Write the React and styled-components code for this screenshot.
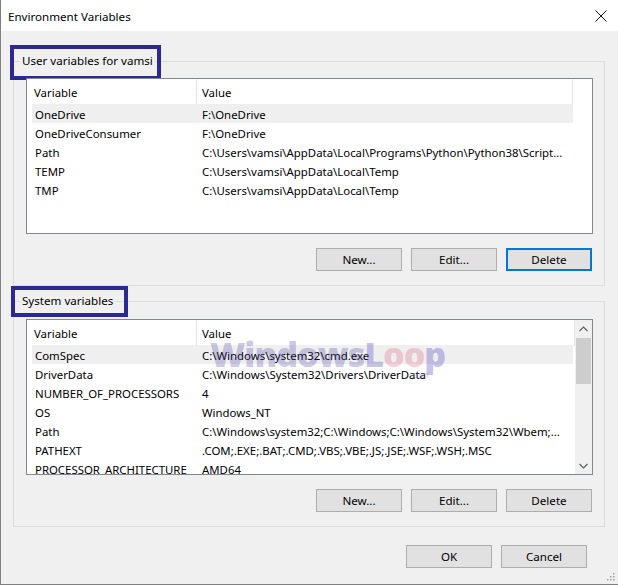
import React from "react";
import styled, { createGlobalStyle } from "styled-components";

const GlobalStyle = createGlobalStyle`
  body {
    margin: 0;
    font-family: "Noto Sans", "Open Sans", sans-serif;
    font-size: 11.4px;
    color: #000;
  }
  * {
    box-sizing: border-box;
  }
`;

const Window = styled.div`
  position: relative;
  width: 618px;
  height: 585px;
  background: #f0f0f0;
  border-left: 1px solid #7f7f7f;
  border-bottom: 1px solid #7f7f7f;
  display: flex;
  flex-direction: column;
  overflow: hidden;
`;

const TitleBar = styled.div`
  height: 31px;
  flex-shrink: 0;
  background: #fff;
  display: flex;
  align-items: center;
  justify-content: space-between;
  padding-left: 7px;
`;

const Title = styled.span`
  font-size: 11.6px;
  padding-top: 1px;
`;

const CloseButton = styled.div`
  width: 34px;
  height: 31px;
  display: flex;
  align-items: center;
  justify-content: center;
`;

const Body = styled.div`
  padding: 22px 13px 0 12px;
  display: flex;
  flex-direction: column;
`;

const Group = styled.fieldset`
  margin: ${(p) => (p.$first ? "0" : "7px 0 0")};
  padding: ${(p) => (p.$first ? "9px" : "10px")} 11px 14px 12px;
  border: 1px solid #dcdcdc;
  min-width: 0;
`;

const Legend = styled.legend`
  position: relative;
  margin-left: -6px;
  padding: 0 2px;
  line-height: 16px;
  font-size: 11.6px;
`;

const Highlight = styled.span`
  position: absolute;
  left: ${(p) => p.$left}px;
  top: ${(p) => p.$top}px;
  width: ${(p) => p.$width}px;
  height: ${(p) => p.$height}px;
  border: 4px solid #2c2a92;
  pointer-events: none;
`;

const List = styled.div`
  position: relative;
  height: 156px;
  background: #fff;
  border: 1px solid #828790;
  display: flex;
  overflow: hidden;
`;

const ListContent = styled.div`
  flex: 1;
  min-width: 0;
`;

const Header = styled.div`
  display: grid;
  grid-template-columns: 170px 1fr;
  height: 25px;
  width: ${(p) => (p.$scroll ? "100%" : "546px")};
`;

const HeaderCell = styled.div`
  line-height: 25px;
  padding-top: 1px;
  padding-left: ${(p) => (p.$first ? 7 : 5)}px;
  border-right: 1px solid #e5e5e5;
  white-space: nowrap;
`;

const Row = styled.div`
  display: grid;
  grid-template-columns: 164px 1fr;
  height: 19px;
  width: 541px;
  margin-left: 5px;
  background: ${(p) => (p.$hover ? "#efefef" : "transparent")};
`;

const Cell = styled.div`
  line-height: 19px;
  padding-top: 1px;
  padding-left: ${(p) => (p.$first ? 3 : 6)}px;
  white-space: nowrap;
  overflow: hidden;
`;

const Scrollbar = styled.div`
  width: 17px;
  flex-shrink: 0;
  background: #f0f0f0;
  display: flex;
  flex-direction: column;
`;

const Arrow = styled.div`
  height: 17px;
  display: flex;
  align-items: center;
  justify-content: center;
`;

const Track = styled.div`
  flex: 1;
  padding: 1px 1px 0;
`;

const Thumb = styled.div`
  height: 46px;
  background: #cdcdcd;
`;

const ButtonRow = styled.div`
  display: flex;
  justify-content: flex-end;
  gap: ${(p) => p.$gap || 9}px;
  margin-top: ${(p) => p.$top || 14}px;
  padding-right: ${(p) => p.$right || 1}px;
`;

const Button = styled.button`
  width: 86px;
  height: 23px;
  background: #e1e1e1;
  border: ${(p) => (p.$default ? "2px solid #0078d7" : "1px solid #adadad")};
  font-family: inherit;
  font-size: 11.6px;
  color: #000;
  padding: 0;
`;

const Watermark = styled.div`
  position: absolute;
  left: 183px;
  top: 14px;
  font-family: "Open Sans", "Noto Sans", sans-serif;
  font-weight: 800;
  font-size: 34px;
  line-height: 40px;
  letter-spacing: -1px;
  white-space: nowrap;
  pointer-events: none;
`;

const Mark = styled.span`
  color: ${(p) => p.$color};
`;

const Dotcom = styled.span`
  position: absolute;
  left: 200px;
  top: 36px;
  font-size: 8px;
  line-height: 10px;
  letter-spacing: 0;
  font-weight: 600;
  color: rgba(110, 100, 190, 0.35);
`;

const Grip = styled.svg`
  position: absolute;
  right: 3px;
  bottom: 3px;
`;

const userVars = [
  ["OneDrive", "F:\\OneDrive"],
  ["OneDriveConsumer", "F:\\OneDrive"],
  ["Path", "C:\\Users\\vamsi\\AppData\\Local\\Programs\\Python\\Python38\\Script..."],
  ["TEMP", "C:\\Users\\vamsi\\AppData\\Local\\Temp"],
  ["TMP", "C:\\Users\\vamsi\\AppData\\Local\\Temp"],
];

const systemVars = [
  ["ComSpec", "C:\\Windows\\system32\\cmd.exe"],
  ["DriverData", "C:\\Windows\\System32\\Drivers\\DriverData"],
  ["NUMBER_OF_PROCESSORS", "4"],
  ["OS", "Windows_NT"],
  ["Path", "C:\\Windows\\system32;C:\\Windows;C:\\Windows\\System32\\Wbem;..."],
  ["PATHEXT", ".COM;.EXE;.BAT;.CMD;.VBS;.VBE;.JS;.JSE;.WSF;.WSH;.MSC"],
  ["PROCESSOR_ARCHITECTURE", "AMD64"],
];

function VarList({ rows, scroll, children }) {
  return (
    <List>
      <ListContent>
        <Header $scroll={scroll}>
          <HeaderCell $first>Variable</HeaderCell>
          <HeaderCell>Value</HeaderCell>
        </Header>
        {rows.map(([name, value], i) => (
          <Row key={name + i} $hover={i === 0}>
            <Cell $first>{name}</Cell>
            <Cell>{value}</Cell>
          </Row>
        ))}
      </ListContent>
      {scroll && (
        <Scrollbar>
          <Arrow>
            <svg width="9" height="6" viewBox="0 0 9 6">
              <path d="M0.5 5 L4.5 1 L8.5 5" fill="none" stroke="#606060" strokeWidth="1.2" />
            </svg>
          </Arrow>
          <Track>
            <Thumb />
          </Track>
          <Arrow>
            <svg width="9" height="6" viewBox="0 0 9 6">
              <path d="M0.5 1 L4.5 5 L8.5 1" fill="none" stroke="#606060" strokeWidth="1.2" />
            </svg>
          </Arrow>
        </Scrollbar>
      )}
      {children}
    </List>
  );
}

export default function App() {
  return (
    <>
      <GlobalStyle />
      <Window>
        <TitleBar>
          <Title>Environment Variables</Title>
          <CloseButton>
            <svg width="12" height="12" viewBox="0 0 12 12">
              <path d="M0.5 0.5 L11.5 11.5 M11.5 0.5 L0.5 11.5" stroke="#111" strokeWidth="1" />
            </svg>
          </CloseButton>
        </TitleBar>
        <Body>
          <Group $first>
            <Legend>
              User variables for vamsi
              <Highlight $left={-10} $top={-8} $width={151} $height={35} />
            </Legend>
            <VarList rows={userVars} />
            <ButtonRow>
              <Button>New...</Button>
              <Button>Edit...</Button>
              <Button $default>Delete</Button>
            </ButtonRow>
          </Group>
          <Group>
            <Legend>
              System variables
              <Highlight $left={-9} $top={-7} $width={117} $height={31} />
            </Legend>
            <VarList rows={systemVars} scroll>
              <Watermark>
                <Mark $color="rgba(80, 70, 170, 0.3)">Windows</Mark>
                <Mark $color="rgba(110, 90, 200, 0.38)">L</Mark>
                <Mark $color="rgba(225, 110, 140, 0.33)">oo</Mark>
                <Mark $color="rgba(110, 90, 200, 0.38)">p</Mark>
                <Dotcom>.com</Dotcom>
              </Watermark>
            </VarList>
            <ButtonRow>
              <Button>New...</Button>
              <Button>Edit...</Button>
              <Button>Delete</Button>
            </ButtonRow>
          </Group>
          <ButtonRow $top={18} $right={18}>
            <Button>OK</Button>
            <Button>Cancel</Button>
          </ButtonRow>
        </Body>
        <Grip width="9" height="9" viewBox="0 0 9 9">
          <g fill="#a0a0a0">
            <rect x="7" y="1" width="1.5" height="1.5" />
            <rect x="4" y="4" width="1.5" height="1.5" />
            <rect x="7" y="4" width="1.5" height="1.5" />
            <rect x="1" y="7" width="1.5" height="1.5" />
            <rect x="4" y="7" width="1.5" height="1.5" />
            <rect x="7" y="7" width="1.5" height="1.5" />
          </g>
        </Grip>
      </Window>
    </>
  );
}
